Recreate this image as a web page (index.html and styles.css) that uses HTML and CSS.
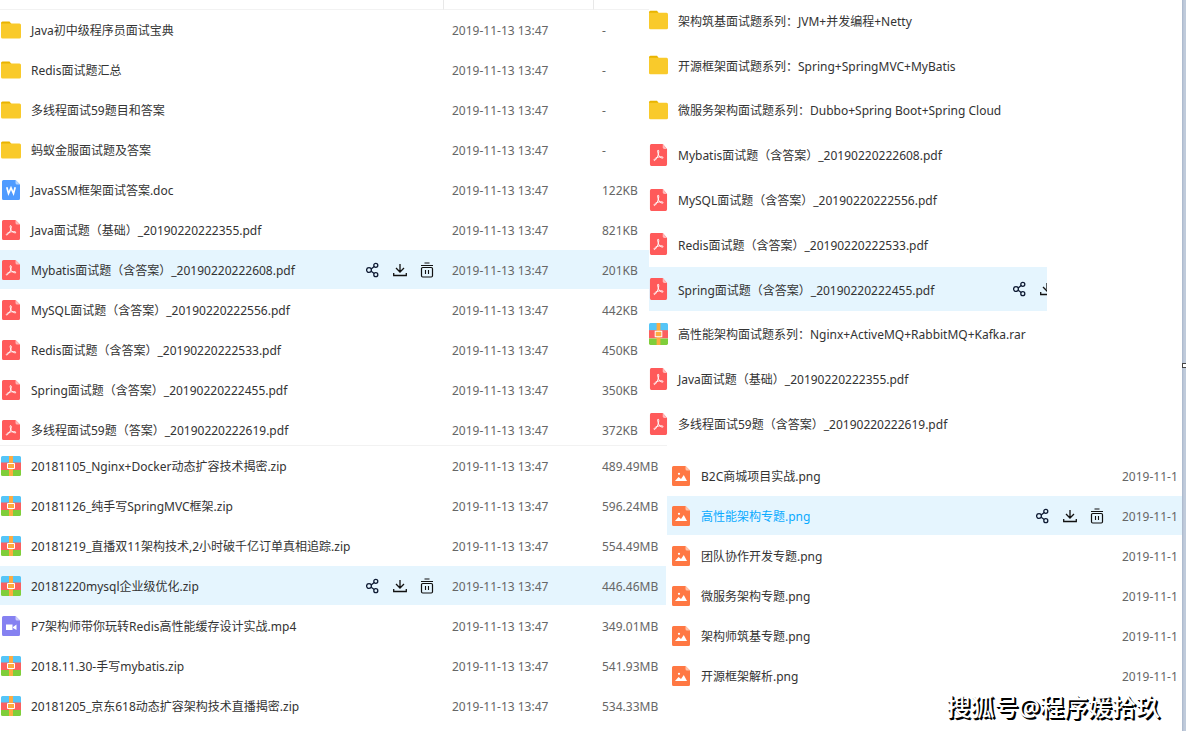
FILE: index.html
```html
<!DOCTYPE html>
<html lang="zh-CN">
<head>
  <meta charset="UTF-8">
  <meta name="viewport" content="width=device-width, initial-scale=1.0">
  <title>面试资料</title>
  <link rel="stylesheet" href="styles.css">
</head>
<body>
  <svg class="sprite" aria-hidden="true">
    <symbol id="i-folder" viewBox="0 0 20 20" preserveAspectRatio="none">
      <path d="M0 3a1.500 1.500 0 0 1 1.500-1.500H8.500L10.500 4v3H0z" fill="#e9b400"/>
      <path d="M0 3.500H18.500a1.500 1.500 0 0 1 1.500 1.500V17a1.500 1.500 0 0 1-1.500 1.500H1.500A1.500 1.500 0 0 1 0 17z" fill="#f9ca2b"/>
    </symbol>
    <symbol id="i-doc" viewBox="0 0 20 20" preserveAspectRatio="none">
      <path d="M2.500 0H14.500L19 4.500V18.500a1.500 1.500 0 0 1-1.500 1.500H2.500A1.500 1.500 0 0 1 1 18.500V1.500A1.500 1.500 0 0 1 2.500 0z" fill="#4f9bff"/>
      <path d="M14.500 0L19 4.500H16a1.500 1.500 0 0 1-1.500-1.500z" fill="#b5d6ff"/>
      <path d="M5.800 7.200l1.700 6.300L10 7.800l2.500 5.700 1.700-6.300" fill="none" stroke="#fff" stroke-width="1.700"/>
    </symbol>
    <symbol id="i-pdf" viewBox="0 0 20 20" preserveAspectRatio="none">
      <path d="M2.500 0H14.500L19 4.500V18.500a1.500 1.500 0 0 1-1.500 1.500H2.500A1.500 1.500 0 0 1 1 18.500V1.500A1.500 1.500 0 0 1 2.500 0z" fill="#ff5a5a"/>
      <path d="M14.500 0L19 4.500H16a1.500 1.500 0 0 1-1.500-1.500z" fill="#ffb9b9"/>
      <path d="M9.500 5.500c1.200 0 .9 2.400.1 4.500-.9 2.300-2.600 5-4 5-1.100-.3.400-2 3-2.800 2.200-.7 5.900-.9 6.300.1.200 1-2.400.5-3.800-.8C9.600 10.200 8.500 5.700 9.500 5.500z" fill="none" stroke="#fff" stroke-width=".9"/>
    </symbol>
    <symbol id="i-zip" viewBox="0 0 20 20" preserveAspectRatio="none">
      <path d="M1.500 0h17A1.500 1.500 0 0 1 20 1.500V7H0V1.500A1.500 1.500 0 0 1 1.500 0z" fill="#55c5f7"/>
      <path d="M0 6.500h20v7.500H0z" fill="#fb5f5f"/>
      <path d="M0 14h20v4.500a1.500 1.500 0 0 1-1.500 1.500h-17A1.500 1.500 0 0 1 0 18.500z" fill="#7fce3a"/>
      <path d="M8 0h4v20H8z" fill="#fdab41"/>
      <path d="M6.500 7.500h7v5h-7z" fill="#fdab41" stroke="#fff"/>
    </symbol>
    <symbol id="i-video" viewBox="0 0 20 20" preserveAspectRatio="none">
      <path d="M2.500 0H14.500L19 4.500V18.500a1.500 1.500 0 0 1-1.500 1.500H2.500A1.500 1.500 0 0 1 1 18.500V1.500A1.500 1.500 0 0 1 2.500 0z" fill="#8581f1"/>
      <path d="M14.500 0L19 4.500H16a1.500 1.500 0 0 1-1.500-1.500z" fill="#cecdfa"/>
      <path d="M5 8.500h6.500v5.500H5zM12 11l3.500-2.500V14L12 12z" fill="#fff"/>
    </symbol>
    <symbol id="i-png" viewBox="0 0 20 20" preserveAspectRatio="none">
      <path d="M2.500 0H14.500L19 4.500V18.500a1.500 1.500 0 0 1-1.500 1.500H2.500A1.500 1.500 0 0 1 1 18.500V1.500A1.500 1.500 0 0 1 2.500 0z" fill="#ff7843"/>
      <path d="M14.500 0L19 4.500H16a1.500 1.500 0 0 1-1.500-1.500z" fill="#ffc5ad"/>
      <path d="M4 15l3.500-4 2.500 2 2.800-4L16 15z" fill="#fff"/>
      <circle cx="8" cy="7.800" r="1.100" fill="#fff"/>
    </symbol>
    <symbol id="i-share" viewBox="0 0 14 16">
      <g fill="none" stroke="#0e1a33" stroke-width="1.300">
        <circle cx="3" cy="8" r="2.400"/>
        <circle cx="9.800" cy="3.300" r="2"/>
        <circle cx="9.800" cy="12.700" r="2"/>
        <path d="M5.200 6.900L8.200 4.600M5.200 9.300l3 2.200"/>
      </g>
    </symbol>
    <symbol id="i-download" viewBox="0 0 14 16">
      <path d="M7 2v8M3 6l4 4 4-4M.7 11v2.500h12.600V11" fill="none" stroke="#111" stroke-width="1.300"/>
    </symbol>
    <symbol id="i-trash" viewBox="0 0 14 16">
      <path d="M4.500 1h5M1 3.500h12M5.500 8v4M8.500 8v4" fill="none" stroke="#111" stroke-width="1.100"/>
      <rect x="1.500" y="5.500" width="11" height="9.500" rx="1.200" fill="none" stroke="#111" stroke-width="1.200"/>
    </symbol>
  </svg>

  <main class="board">
    <div class="band band-top">
      <section class="pane">
        <table class="files">
          <colgroup><col class="c-icon"><col><col class="c-actions"><col class="c-date"><col class="c-size"></colgroup>
          <thead><tr><th></th><th></th><th></th><th></th><th></th></tr></thead>
          <tbody>
            <tr><td><svg class="icon"><use href="#i-folder"/></svg></td><td><a href="#">Java初中级程序员面试宝典</a></td><td></td><td>2019-11-13 13:47</td><td>-</td></tr>
            <tr><td><svg class="icon"><use href="#i-folder"/></svg></td><td><a href="#">Redis面试题汇总</a></td><td></td><td>2019-11-13 13:47</td><td>-</td></tr>
            <tr><td><svg class="icon"><use href="#i-folder"/></svg></td><td><a href="#">多线程面试59题目和答案</a></td><td></td><td>2019-11-13 13:47</td><td>-</td></tr>
            <tr><td><svg class="icon"><use href="#i-folder"/></svg></td><td><a href="#">蚂蚁金服面试题及答案</a></td><td></td><td>2019-11-13 13:47</td><td>-</td></tr>
            <tr><td><svg class="icon"><use href="#i-doc"/></svg></td><td><a href="#">JavaSSM框架面试答案.doc</a></td><td></td><td>2019-11-13 13:47</td><td>122KB</td></tr>
            <tr><td><svg class="icon"><use href="#i-pdf"/></svg></td><td><a href="#">Java面试题（基础）_20190220222355.pdf</a></td><td></td><td>2019-11-13 13:47</td><td>821KB</td></tr>
            <tr class="active">
              <td><svg class="icon"><use href="#i-pdf"/></svg></td>
              <td><a href="#">Mybatis面试题（含答案）_20190220222608.pdf</a></td>
              <td>
                <div class="actions">
                  <button type="button" aria-label="分享"><svg><use href="#i-share"/></svg></button>
                  <button type="button" aria-label="下载"><svg><use href="#i-download"/></svg></button>
                  <button type="button" aria-label="删除"><svg><use href="#i-trash"/></svg></button>
                </div>
              </td>
              <td>2019-11-13 13:47</td>
              <td>201KB</td>
            </tr>
            <tr><td><svg class="icon"><use href="#i-pdf"/></svg></td><td><a href="#">MySQL面试题（含答案）_20190220222556.pdf</a></td><td></td><td>2019-11-13 13:47</td><td>442KB</td></tr>
            <tr><td><svg class="icon"><use href="#i-pdf"/></svg></td><td><a href="#">Redis面试题（含答案）_20190220222533.pdf</a></td><td></td><td>2019-11-13 13:47</td><td>450KB</td></tr>
            <tr><td><svg class="icon"><use href="#i-pdf"/></svg></td><td><a href="#">Spring面试题（含答案）_20190220222455.pdf</a></td><td></td><td>2019-11-13 13:47</td><td>350KB</td></tr>
            <tr><td><svg class="icon"><use href="#i-pdf"/></svg></td><td><a href="#">多线程面试59题（答案）_20190220222619.pdf</a></td><td></td><td>2019-11-13 13:47</td><td>372KB</td></tr>
          </tbody>
        </table>
      </section>

      <section class="pane pane-topics">
        <table class="files">
          <colgroup><col class="c-icon"><col><col class="c-actions"></colgroup>
          <tbody>
            <tr><td><svg class="icon"><use href="#i-folder"/></svg></td><td><a href="#">架构筑基面试题系列：JVM+并发编程+Netty</a></td><td></td></tr>
            <tr><td><svg class="icon"><use href="#i-folder"/></svg></td><td><a href="#">开源框架面试题系列：Spring+SpringMVC+MyBatis</a></td><td></td></tr>
            <tr><td><svg class="icon"><use href="#i-folder"/></svg></td><td><a href="#">微服务架构面试题系列：Dubbo+Spring Boot+Spring Cloud</a></td><td></td></tr>
            <tr><td><svg class="icon"><use href="#i-pdf"/></svg></td><td><a href="#">Mybatis面试题（含答案）_20190220222608.pdf</a></td><td></td></tr>
            <tr><td><svg class="icon"><use href="#i-pdf"/></svg></td><td><a href="#">MySQL面试题（含答案）_20190220222556.pdf</a></td><td></td></tr>
            <tr><td><svg class="icon"><use href="#i-pdf"/></svg></td><td><a href="#">Redis面试题（含答案）_20190220222533.pdf</a></td><td></td></tr>
            <tr class="active">
              <td><svg class="icon"><use href="#i-pdf"/></svg></td>
              <td><a href="#">Spring面试题（含答案）_20190220222455.pdf</a></td>
              <td>
                <div class="actions">
                  <button type="button" aria-label="分享"><svg><use href="#i-share"/></svg></button>
                  <button type="button" aria-label="下载"><svg><use href="#i-download"/></svg></button>
                </div>
              </td>
            </tr>
            <tr><td><svg class="icon"><use href="#i-zip"/></svg></td><td><a href="#">高性能架构面试题系列：Nginx+ActiveMQ+RabbitMQ+Kafka.rar</a></td><td></td></tr>
            <tr><td><svg class="icon"><use href="#i-pdf"/></svg></td><td><a href="#">Java面试题（基础）_20190220222355.pdf</a></td><td></td></tr>
            <tr><td><svg class="icon"><use href="#i-pdf"/></svg></td><td><a href="#">多线程面试59题（含答案）_20190220222619.pdf</a></td><td></td></tr>
          </tbody>
        </table>
      </section>
    </div>

    <div class="band band-bottom">
      <section class="pane pane-archives">
        <table class="files">
          <colgroup><col class="c-icon"><col><col class="c-actions"><col class="c-date"><col class="c-size"></colgroup>
          <tbody>
            <tr><td><svg class="icon"><use href="#i-zip"/></svg></td><td><a href="#">20181105_Nginx+Docker动态扩容技术揭密.zip</a></td><td></td><td>2019-11-13 13:47</td><td>489.49MB</td></tr>
            <tr><td><svg class="icon"><use href="#i-zip"/></svg></td><td><a href="#">20181126_纯手写SpringMVC框架.zip</a></td><td></td><td>2019-11-13 13:47</td><td>596.24MB</td></tr>
            <tr><td><svg class="icon"><use href="#i-zip"/></svg></td><td><a href="#">20181219_直播双11架构技术,2小时破千亿订单真相追踪.zip</a></td><td></td><td>2019-11-13 13:47</td><td>554.49MB</td></tr>
            <tr class="active">
              <td><svg class="icon"><use href="#i-zip"/></svg></td>
              <td><a href="#">20181220mysql企业级优化.zip</a></td>
              <td>
                <div class="actions">
                  <button type="button" aria-label="分享"><svg><use href="#i-share"/></svg></button>
                  <button type="button" aria-label="下载"><svg><use href="#i-download"/></svg></button>
                  <button type="button" aria-label="删除"><svg><use href="#i-trash"/></svg></button>
                </div>
              </td>
              <td>2019-11-13 13:47</td>
              <td>446.46MB</td>
            </tr>
            <tr><td><svg class="icon"><use href="#i-video"/></svg></td><td><a href="#">P7架构师带你玩转Redis高性能缓存设计实战.mp4</a></td><td></td><td>2019-11-13 13:47</td><td>349.01MB</td></tr>
            <tr><td><svg class="icon"><use href="#i-zip"/></svg></td><td><a href="#">2018.11.30-手写mybatis.zip</a></td><td></td><td>2019-11-13 13:47</td><td>541.93MB</td></tr>
            <tr><td><svg class="icon"><use href="#i-zip"/></svg></td><td><a href="#">20181205_京东618动态扩容架构技术直播揭密.zip</a></td><td></td><td>2019-11-13 13:47</td><td>534.33MB</td></tr>
          </tbody>
        </table>
      </section>

      <section class="pane pane-images">
        <table class="files">
          <colgroup><col class="c-icon"><col><col class="c-actions"><col class="c-date"></colgroup>
          <tbody>
            <tr><td><svg class="icon"><use href="#i-png"/></svg></td><td><a href="#">B2C商城项目实战.png</a></td><td></td><td>2019-11-1</td></tr>
            <tr class="active">
              <td><svg class="icon"><use href="#i-png"/></svg></td>
              <td><a href="#" class="current">高性能架构专题.png</a></td>
              <td>
                <div class="actions">
                  <button type="button" aria-label="分享"><svg><use href="#i-share"/></svg></button>
                  <button type="button" aria-label="下载"><svg><use href="#i-download"/></svg></button>
                  <button type="button" aria-label="删除"><svg><use href="#i-trash"/></svg></button>
                </div>
              </td>
              <td>2019-11-1</td>
            </tr>
            <tr><td><svg class="icon"><use href="#i-png"/></svg></td><td><a href="#">团队协作开发专题.png</a></td><td></td><td>2019-11-1</td></tr>
            <tr><td><svg class="icon"><use href="#i-png"/></svg></td><td><a href="#">微服务架构专题.png</a></td><td></td><td>2019-11-1</td></tr>
            <tr><td><svg class="icon"><use href="#i-png"/></svg></td><td><a href="#">架构师筑基专题.png</a></td><td></td><td>2019-11-1</td></tr>
            <tr><td><svg class="icon"><use href="#i-png"/></svg></td><td><a href="#">开源框架解析.png</a></td><td></td><td>2019-11-1</td></tr>
          </tbody>
        </table>
      </section>
    </div>
  </main>

  <div class="edge"><span class="grip"></span></div>
  <div class="watermark">搜狐号@程序媛拾玖</div>
</body>
</html>
```
FILE: styles.css
```css
body {
  margin: 0;
  min-height: 100vh;
  display: flex;
  position: relative;
  overflow: hidden;
  background: #fff;
  color: #333;
  font-family: "Noto Sans", "Noto Sans CJK SC", sans-serif;
  font-size: 12px;
  line-height: 20px;
}
.sprite {
  position: absolute;
  width: 0;
  height: 0;
}
.board {
  flex: 1;
  min-width: 0;
}
.band {
  display: grid;
  align-items: start;
}
.band-top {
  grid-template-columns: 649fr 533fr;
}
.band-bottom {
  grid-template-columns: 667fr 515fr;
  margin-top: -5px;
}
.pane {
  min-width: 0;
  overflow: hidden;
}

/* file tables */
.files {
  width: 100%;
  table-layout: fixed;
  border-collapse: separate;
  border-spacing: 0;
}
.c-icon {
  width: 31px;
}
.c-actions {
  width: 77px;
}
.c-date {
  width: 150px;
}
.c-size {
  width: 56px;
}
.files th {
  height: 9px;
  padding: 0;
  border-bottom: 1px solid #f2f2f2;
}
.files th:nth-child(n+4) {
  border-left: 1px solid #e8e8e8;
}
.files td {
  height: 37px;
  padding: 2px 0 0;
  border-bottom: 1px solid #fff;
  white-space: nowrap;
}
.files td:first-child {
  padding: 0 0 0 1px;
}
.files td:nth-child(3) {
  padding: 0;
}
.files td:nth-child(n+4) {
  padding-left: 9px;
  color: #666;
}
.files a {
  color: #333;
  text-decoration: none;
}
.files a.current {
  color: #09aaff;
}
.active td {
  background: #e5f5fe;
  background-clip: padding-box;
}
.icon {
  display: block;
  width: 20px;
  height: 20px;
}
.actions {
  display: flex;
  gap: 13px;
}
.actions button {
  flex: none;
  padding: 0;
  border: 0;
  background: none;
  cursor: pointer;
}
.actions svg {
  display: block;
  width: 14px;
  height: 16px;
}

.pane-topics {
  max-width: 398px;
  margin-top: -2px;
}
.pane-topics .files {
  width: 441px;
  height: 448px;
}
.pane-topics .c-icon {
  width: 29px;
}
.pane-topics td {
  padding-top: 4px;
}
.pane-topics td:first-child {
  padding: 1px 0 0;
}
.pane-topics .icon {
  width: 19px;
  height: 22px;
}

.pane-archives {
  padding-right: 1px;
  border-top: 1px solid #f2f2f2;
  background: #fff;
}
.pane-archives .c-size {
  width: 73px;
}

.pane-images {
  padding-top: 11px;
}
.pane-images .c-icon {
  width: 34px;
}
.pane-images td:first-child {
  padding-left: 4px;
}
.pane-images .c-date {
  width: 69px;
}

/* window edge on the right */
.edge {
  flex: none;
  width: 4px;
  display: flex;
  align-items: center;
  background: linear-gradient(90deg, #a9b6ca, #c0cbdb 50%);
}
.grip {
  width: 4px;
  height: 5px;
  box-sizing: border-box;
  border: 1px solid #444;
  border-right: 0;
  background: #fff;
}

.watermark {
  position: absolute;
  right: 26px;
  bottom: 8px;
  color: #fff;
  font-size: 24px;
  font-weight: 500;
  line-height: 32px;
  text-shadow: 1px 1px 0 #000, 2px 2px 0 #000;
}
```
